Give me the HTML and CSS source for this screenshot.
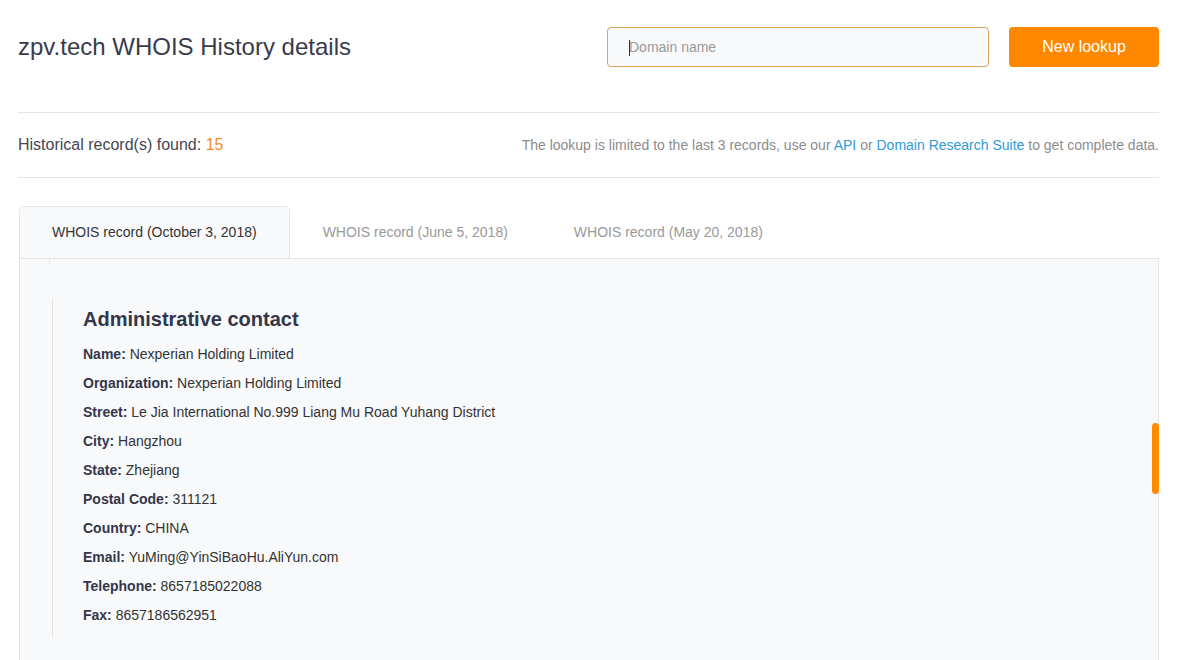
FILE: index.html
```html
<!DOCTYPE html>
<html lang="en">
<head>
<meta charset="utf-8">
<title>zpv.tech WHOIS History details</title>
<link rel="stylesheet" href="styles.css">
</head>
<body>
<div class="page">
  <header class="header">
    <h1 class="title">zpv.tech WHOIS History details</h1>
    <form class="search">
      <div class="input"><span class="caret"></span><span class="placeholder">Domain name</span></div>
      <button class="btn" type="button">New lookup</button>
    </form>
  </header>
  <div class="summary">
    <div class="found">Historical record(s) found: <span class="count">15</span></div>
    <div class="note">The lookup is limited to the last 3 records, use our <a href="#">API</a> or <a href="#">Domain Research Suite</a> to get complete data.</div>
  </div>
  <nav class="tabs">
    <div class="tab active">WHOIS record (October 3, 2018)</div>
    <div class="tab">WHOIS record (June 5, 2018)</div>
    <div class="tab">WHOIS record (May 20, 2018)</div>
  </nav>
  <section class="panel">
    <div class="stub"></div>
    <div class="contact">
      <h2 class="contact-title">Administrative contact</h2>
      <div class="row"><b>Name:</b> Nexperian Holding Limited</div>
      <div class="row"><b>Organization:</b> Nexperian Holding Limited</div>
      <div class="row"><b>Street:</b> Le Jia International No.999 Liang Mu Road Yuhang District</div>
      <div class="row"><b>City:</b> Hangzhou</div>
      <div class="row"><b>State:</b> Zhejiang</div>
      <div class="row"><b>Postal Code:</b> 311121</div>
      <div class="row"><b>Country:</b> CHINA</div>
      <div class="row"><b>Email:</b> YuMing@YinSiBaoHu.AliYun.com</div>
      <div class="row"><b>Telephone:</b> 8657185022088</div>
      <div class="row"><b>Fax:</b> 8657186562951</div>
    </div>
    <div class="thumb"></div>
  </section>
</div>
</body>
</html>
```
FILE: styles.css
```css
html, body {
  margin: 0;
  padding: 0;
  background: #ffffff;
}
body {
  font-family: "Liberation Sans", Arial, sans-serif;
  color: #333;
}
.page {
  padding: 27px 19px 0 18px;
}
.header {
  display: flex;
  align-items: center;
  justify-content: space-between;
  height: 40px;
  padding-bottom: 45px;
  border-bottom: 1px solid #e6e6e6;
}
.title {
  margin: 0;
  font-size: 24px;
  font-weight: normal;
  color: #383b4c;
  line-height: 40px;
}
.search {
  display: flex;
  gap: 20px;
  margin: 0;
}
.input {
  box-sizing: border-box;
  width: 382px;
  height: 40px;
  border: 1px solid #d9a15a;
  border-radius: 4px;
  background: #f8f9fb;
  display: flex;
  align-items: center;
  padding-left: 21px;
  position: relative;
}
.caret {
  position: absolute;
  left: 21px;
  top: 12px;
  width: 1px;
  height: 16px;
  background: #333;
}
.placeholder {
  font-size: 14px;
  color: #9a9a9a;
}
.btn {
  width: 150px;
  height: 40px;
  border: 0;
  border-radius: 4px;
  background: #ff8800;
  color: #fff;
  font-family: "Liberation Sans", Arial, sans-serif;
  font-size: 16px;
  padding: 0;
}
.summary {
  display: flex;
  justify-content: space-between;
  align-items: center;
  padding: 20px 0;
  line-height: 24px;
  border-bottom: 1px solid #e6e6e6;
}
.found {
  font-size: 16px;
  color: #444650;
}
.count {
  color: #f58a1f;
}
.note {
  font-size: 14px;
  color: #8c8c8c;
}
.note a {
  color: #2f9bd6;
  text-decoration: none;
}
.tabs {
  display: flex;
  margin-top: 28px;
  padding-left: 1px;
  position: relative;
  z-index: 1;
}
.tab {
  box-sizing: border-box;
  height: 52px;
  line-height: 50px;
  padding: 0 32px;
  font-size: 14px;
  color: #999;
  border: 1px solid transparent;
  border-bottom: 0;
}
.tab.active {
  color: #333;
  background: #f8f9fb;
  border-color: #e6e6e6;
  border-radius: 5px 5px 0 0;
  height: 52px;
  margin-bottom: -1px;
}
.panel {
  position: relative;
  margin-left: 1px;
  background: #f8f9fb;
  border: 1px solid #e6e6e6;
  border-bottom: 0;
  min-height: 420px;
  padding: 0 32px;
}
.stub {
  width: 0;
  height: 5px;
  border-left: 1px solid #e6e6e6;
  margin-left: -3px;
}
.contact {
  margin-top: 34px;
  border-left: 1px solid #e3e3e3;
  padding: 8px 0 8px 30px;
}
.contact-title {
  margin: 0 0 8px;
  font-size: 20px;
  line-height: 26px;
  font-weight: bold;
  color: #33364a;
}
.row {
  font-size: 14px;
  line-height: 29px;
  color: #333;
}
.row b {
  color: #33364a;
}
.thumb {
  position: absolute;
  right: -1px;
  top: 164px;
  width: 7px;
  height: 71px;
  border-radius: 4px;
  background: #ff8a00;
}
```
